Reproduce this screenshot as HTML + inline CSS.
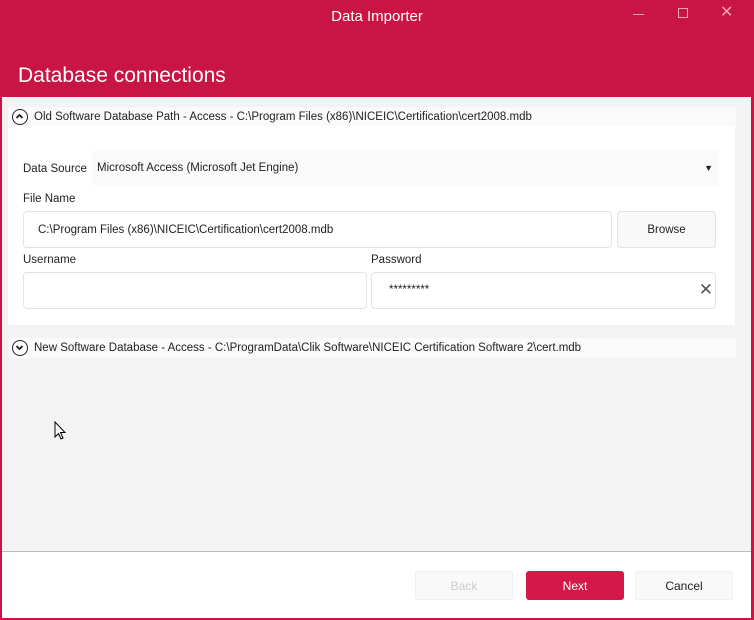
<!DOCTYPE html>
<html><head><meta charset="utf-8"><style>
*{box-sizing:border-box;margin:0;padding:0}
body{width:754px;height:620px;overflow:hidden;font-family:"Liberation Sans",sans-serif;background:#c91545;position:relative;color:#222}
.title{position:absolute;top:8px;left:0;width:754px;text-align:center;color:#fff;font-size:15px}
.h1{position:absolute;left:18px;top:64px;color:#fff;font-size:21px}
.win{position:absolute;left:2px;top:97px;width:749px;height:521px;background:#f3f3f3}
.hdr{position:absolute;left:6px;width:728px;height:20px;background:#fafafa;font-size:11.5px;line-height:20px;padding-left:26px}
.ic{position:absolute;left:4px;top:2px;width:16px;height:16px;border:1.5px solid #222;border-radius:50%}
.panel{position:absolute;left:6px;top:29px;width:727px;height:199px;background:#fff}
.lbl{position:absolute;font-size:11.5px}
.box{position:absolute;background:#fff;border:1px solid #e3e3e3;border-radius:4px;font-size:11.5px}
.foot{position:absolute;left:0;top:454px;width:749px;height:67px;background:#fff;border-top:1px solid #bbb}
.btn{position:absolute;top:474px;width:98px;height:29px;border-radius:3px;font-size:12px;text-align:center;line-height:29px;background:#f9f9f9;border:1px solid #eee}
</style></head><body>
<div class="title">Data Importer</div>
<div style="position:absolute;left:633px;top:14px;width:11px;height:1px;background:#f3a6b8"></div>
<div style="position:absolute;left:678px;top:8px;width:10px;height:10px;border:1px solid #f3a6b8"></div>
<div style="position:absolute;left:720px;top:2px;color:#f3a6b8;font-size:16px">✕</div>
<div class="h1">Database connections</div>
<div class="win">
 <div class="hdr" style="top:10px"><div class="ic"><svg width="13" height="13" viewBox="0 0 13 13" style="position:absolute;left:0;top:0"><path d="M3.5 8 L6.5 5 L9.5 8" stroke="#222" stroke-width="1.8" fill="none"/></svg></div>Old Software Database Path - Access - C:\Program Files (x86)\NICEIC\Certification\cert2008.mdb</div>
 <div class="panel">
  <div class="lbl" style="left:15px;top:37px">Data Source</div>
  <div class="box" style="left:84px;top:24px;width:627px;height:36px;border:none;background:#fafafa;line-height:36px;padding-left:5px">Microsoft Access (Microsoft Jet Engine)<span style="position:absolute;right:6px;font-size:9px">▼</span></div>
  <div class="lbl" style="left:15px;top:67px">File Name</div>
  <div class="box" style="left:15px;top:85px;width:589px;height:37px;line-height:36px;padding-left:14px">C:\Program Files (x86)\NICEIC\Certification\cert2008.mdb</div>
  <div class="box" style="left:609px;top:85px;width:99px;height:37px;line-height:36px;text-align:center;background:#f9f9f9">Browse</div>
  <div class="lbl" style="left:15px;top:128px">Username</div>
  <div class="box" style="left:15px;top:146px;width:344px;height:37px"></div>
  <div class="lbl" style="left:363px;top:128px">Password</div>
  <div class="box" style="left:363px;top:146px;width:345px;height:37px;line-height:34px;padding-left:17px">*********<span style="position:absolute;right:2px;top:0;font-size:17px;color:#555">✕</span></div>
 </div>
 <div class="hdr" style="top:241px"><div class="ic"><svg width="13" height="13" viewBox="0 0 13 13" style="position:absolute;left:0;top:0"><path d="M3.5 5 L6.5 8 L9.5 5" stroke="#222" stroke-width="1.8" fill="none"/></svg></div>New Software Database - Access - C:\ProgramData\Clik Software\NICEIC Certification Software 2\cert.mdb</div>
 <svg style="position:absolute;left:52px;top:324px" width="14" height="20" viewBox="0 0 14 20"><path d="M1 1 L1 16 L4.5 12.5 L7 18 L9 17 L6.5 11.5 L11 11.5 Z" fill="#fff" stroke="#000" stroke-width="1"/></svg>
 <div class="foot"></div>
 <div class="btn" style="left:413px;color:#ccc">Back</div>
 <div class="btn" style="left:524px;background:#d41848;border-color:#d41848;color:#fff">Next</div>
 <div class="btn" style="left:633px">Cancel</div>
</div>
</body></html>
